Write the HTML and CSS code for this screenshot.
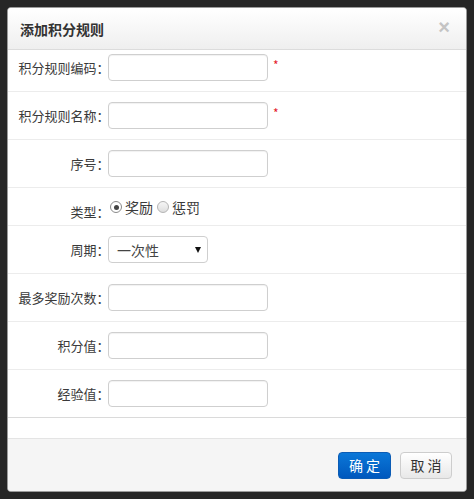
FILE: index.html
```html
<!DOCTYPE html>
<html lang="zh-CN">
<head>
<meta charset="utf-8">
<title>添加积分规则</title>
<link rel="stylesheet" href="styles.css">
</head>
<body>
<div class="modal">
  <div class="modal-header">
    <h3 class="modal-title">添加积分规则</h3>
    <span class="close">×</span>
  </div>
  <div class="modal-body">
    <div class="row row-first">
      <label class="label">积分规则编码：</label>
      <input class="text" type="text">
      <span class="req">*</span>
    </div>
    <div class="row">
      <label class="label">积分规则名称：</label>
      <input class="text" type="text">
      <span class="req">*</span>
    </div>
    <div class="row">
      <label class="label">序号：</label>
      <input class="text" type="text">
    </div>
    <div class="row row-radio">
      <label class="label label-low">类型：</label>
      <span class="radios">
        <span class="radio checked"></span><span class="radio-text">奖励</span><span class="radio radio-second"></span><span class="radio-text">惩罚</span>
      </span>
    </div>
    <div class="row">
      <label class="label">周期：</label>
      <span class="select">
        <span class="select-value">一次性</span>
        <span class="select-arrow"></span>
      </span>
    </div>
    <div class="row">
      <label class="label">最多奖励次数：</label>
      <input class="text" type="text">
    </div>
    <div class="row">
      <label class="label">积分值：</label>
      <input class="text" type="text">
    </div>
    <div class="row row-last">
      <label class="label">经验值：</label>
      <input class="text" type="text">
    </div>
  </div>
  <div class="modal-footer">
    <button class="btn btn-primary" type="button">确 定</button>
    <button class="btn btn-default" type="button">取 消</button>
  </div>
</div>
</body>
</html>
```

FILE: styles.css
```css
html, body {
  margin: 0;
  padding: 0;
}
body {
  background: #262626;
  padding: 7px;
  font-family: "Noto Sans CJK SC", "Liberation Sans", sans-serif;
  font-size: 13px;
  color: #3a3a3a;
}
.modal {
  width: 458px;
  height: 483px;
  background: #fff;
  border: 1px solid #9a9a9a;
  border-radius: 4px;
  display: flex;
  flex-direction: column;
  overflow: hidden;
}
.modal-header {
  height: 41px;
  flex: none;
  display: flex;
  align-items: center;
  justify-content: space-between;
  padding: 0 16px 0 12px;
  background: linear-gradient(#ffffff, #efefef);
  border-bottom: 1px solid #dcdcdc;
}
.modal-title {
  margin: 0;
  font-size: 14px;
  font-weight: bold;
  color: #333;
  line-height: 20px;
}
.close {
  font-family: "Liberation Sans", sans-serif;
  font-size: 20px;
  font-weight: bold;
  color: #c4c4c4;
  line-height: 20px;
  margin-top: -4px;
}
.modal-body {
  flex: 1;
  padding-bottom: 20px;
}
.row {
  display: flex;
  align-items: center;
  padding: 10px 0;
  border-bottom: 1px solid #ececec;
}
.row-first {
  padding-top: 4px;
}
.row-radio {
  padding: 10px 0 9px;
  height: 18px;
}
.row-last {
  border-bottom-color: #dadada;
}
.label {
  width: 95px;
  text-align: right;
  flex: none;
  margin-right: 5px;
  font-feature-settings: "halt";
  line-height: 18px;
}
.label-low {
  position: relative;
  top: 5px;
}
.text {
  width: 160px;
  height: 27px;
  box-sizing: border-box;
  border: 1px solid #cfcfcf;
  border-radius: 4px;
  box-shadow: inset 0 1px 1px rgba(0,0,0,0.06);
  padding: 0 6px;
  margin: 0;
  font: inherit;
  background: #fff;
}
.req {
  color: #e4202a;
  font-size: 12px;
  margin-left: 5px;
  position: relative;
  top: -3px;
}
.radios {
  display: flex;
  align-items: center;
}
.radio {
  width: 12px;
  height: 12px;
  border-radius: 50%;
  border: 1px solid #b4b4b4;
  background: linear-gradient(#f6f6f6, #dedede);
  box-sizing: border-box;
  display: inline-flex;
  align-items: center;
  justify-content: center;
  margin: 0 3px 0 2px;
}
.radio-second {
  margin-left: 4px;
}
.radio.checked {
  background: #fff;
  border-color: #8a8a8a;
}
.radio.checked::after {
  content: "";
  width: 5px;
  height: 5px;
  border-radius: 50%;
  background: #444;
}
.radio-text {
  font-size: 14px;
  line-height: 18px;
}
.select {
  width: 100px;
  height: 27px;
  box-sizing: border-box;
  border: 1px solid #cfcfcf;
  border-radius: 4px;
  display: flex;
  align-items: center;
  justify-content: space-between;
  padding: 0 6px 0 8px;
  background: #fff;
}
.select-value {
  font-size: 14px;
  color: #444;
}
.select-arrow {
  width: 0;
  height: 0;
  border-left: 3px solid transparent;
  border-right: 3px solid transparent;
  border-top: 6px solid #111;
}
.modal-footer {
  height: 53px;
  flex: none;
  background: #f5f5f5;
  border-top: 1px solid #e4e4e4;
  display: flex;
  align-items: center;
  justify-content: flex-end;
  gap: 9px;
  padding: 0 14px;
}
.btn {
  height: 27px;
  padding: 0;
  border-radius: 4px;
  font-family: "Noto Sans CJK SC", sans-serif;
  font-size: 14px;
  line-height: 25px;
  white-space: nowrap;
  cursor: pointer;
  box-sizing: border-box;
  text-align: center;
}
.btn-primary {
  width: 53px;
  color: #fff;
  border: 1px solid #0b5cb5;
  background: linear-gradient(#0a77d8, #0058bd);
}
.btn-default {
  width: 52px;
  color: #333;
  border: 1px solid #cdcdcd;
  background: linear-gradient(#ffffff, #e8e8e8);
}
```
